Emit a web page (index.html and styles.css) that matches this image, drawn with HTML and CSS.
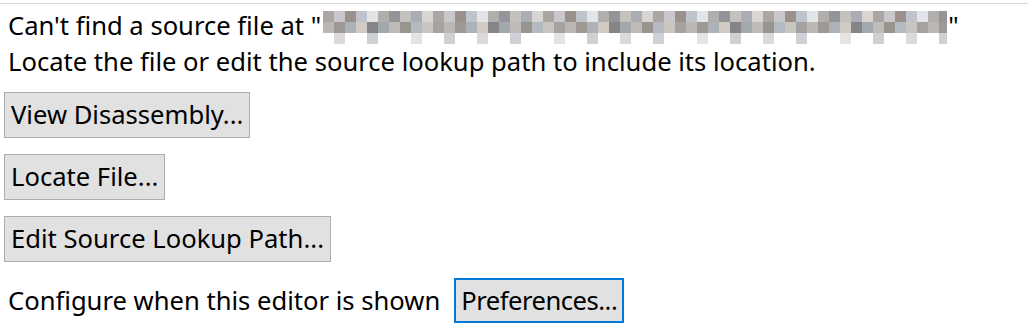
FILE: index.html
```html
<!DOCTYPE html>
<html lang="en">
<head>
  <meta charset="UTF-8">
  <title>Source not found</title>
  <link rel="stylesheet" href="styles.css">
</head>
<body>
  <div class="editor">
    <div class="message">
      <div class="msg-line">Can't find a source file at "<svg class="blurred" width="624" height="33" viewBox="0 0 624 33">
          <defs>
            <pattern id="mosaic-a" width="110" height="11" patternUnits="userSpaceOnUse">
              <rect x="0" y="0" width="11" height="11" fill="#aca6a3"/>
              <rect x="11" y="0" width="11" height="11" fill="#c9c7cc"/>
              <rect x="22" y="0" width="11" height="11" fill="#9a918c"/>
              <rect x="33" y="0" width="11" height="11" fill="#bfc3cb"/>
              <rect x="44" y="0" width="11" height="11" fill="#e2e4e8"/>
              <rect x="55" y="0" width="11" height="11" fill="#b2aeac"/>
              <rect x="66" y="0" width="11" height="11" fill="#94959a"/>
              <rect x="77" y="0" width="11" height="11" fill="#c5c1bf"/>
              <rect x="88" y="0" width="11" height="11" fill="#aaadb3"/>
              <rect x="99" y="0" width="11" height="11" fill="#d8d5d2"/>
            </pattern>
            <pattern id="mosaic-b" width="121" height="11" patternUnits="userSpaceOnUse">
              <rect x="0" y="0" width="11" height="11" fill="#bab7b5"/>
              <rect x="11" y="0" width="11" height="11" fill="#9e9995"/>
              <rect x="22" y="0" width="11" height="11" fill="#adb1b8"/>
              <rect x="33" y="0" width="11" height="11" fill="#d2cbc4"/>
              <rect x="44" y="0" width="11" height="11" fill="#858486"/>
              <rect x="55" y="0" width="11" height="11" fill="#a3a8ad"/>
              <rect x="66" y="0" width="11" height="11" fill="#bebbb8"/>
              <rect x="77" y="0" width="11" height="11" fill="#98958f"/>
              <rect x="88" y="0" width="11" height="11" fill="#b4bac1"/>
              <rect x="99" y="0" width="11" height="11" fill="#c9c5c0"/>
              <rect x="110" y="0" width="11" height="11" fill="#a5a3a2"/>
            </pattern>
            <pattern id="mosaic-c" width="143" height="11" patternUnits="userSpaceOnUse">
              <rect x="11" y="0" width="11" height="11" fill="#dcd9d8"/>
              <rect x="44" y="0" width="11" height="11" fill="#cdd0d4"/>
              <rect x="88" y="0" width="11" height="11" fill="#e6e3e0"/>
              <rect x="121" y="0" width="11" height="11" fill="#d0d0d0"/>
            </pattern>
          </defs>
          <rect x="0" y="0" width="624" height="11" fill="url(#mosaic-a)"/>
          <rect x="0" y="11" width="624" height="11" fill="url(#mosaic-b)"/>
          <rect x="0" y="22" width="624" height="11" fill="url(#mosaic-c)"/>
        </svg>"</div>
      <div class="msg-line">Locate the file or edit the source lookup path to include its location.</div>
    </div>

    <div class="actions">
      <button class="btn">View Disassembly...</button>
      <button class="btn">Locate File...</button>
      <button class="btn">Edit Source Lookup Path...</button>
    </div>

    <div class="prefs-row">
      <span class="prefs-label">Configure when this editor is shown</span>
      <button class="btn btn-focus">Preferences...</button>
    </div>
  </div>
</body>
</html>
```

FILE: styles.css
```css
* {
  margin: 0;
  padding: 0;
  box-sizing: border-box;
}

html, body {
  background: #ffffff;
  font-family: "Noto Sans", "Open Sans", sans-serif;
  font-size: 25.6px;
  color: #000000;
}

body {
  padding-top: 3px;
}

.editor {
  border-top: 1px solid #d9d9d9;
  padding: 0 4px;
}

.message {
  padding: 4px 0 0 4px;
}

.msg-line {
  line-height: 35px;
  white-space: nowrap;
}

.blurred {
  vertical-align: -9px;
  margin: 0 1px 0 2px;
}

.actions {
  display: flex;
  flex-direction: column;
  align-items: flex-start;
  gap: 16px;
  margin-top: 13px;
}

.btn {
  font-family: inherit;
  font-size: 25.6px;
  line-height: 32px;
  height: 46px;
  padding: 0 6px;
  background: #e1e1e1;
  border: 1px solid #adadad;
  color: #000000;
}

.btn-focus {
  border: 2px solid #0078d7;
  height: 45px;
  padding: 0 5px;
  letter-spacing: -0.5px;
}

.prefs-row {
  display: flex;
  align-items: center;
  gap: 14px;
  margin-top: 16px;
  padding-left: 4px;
}
```
